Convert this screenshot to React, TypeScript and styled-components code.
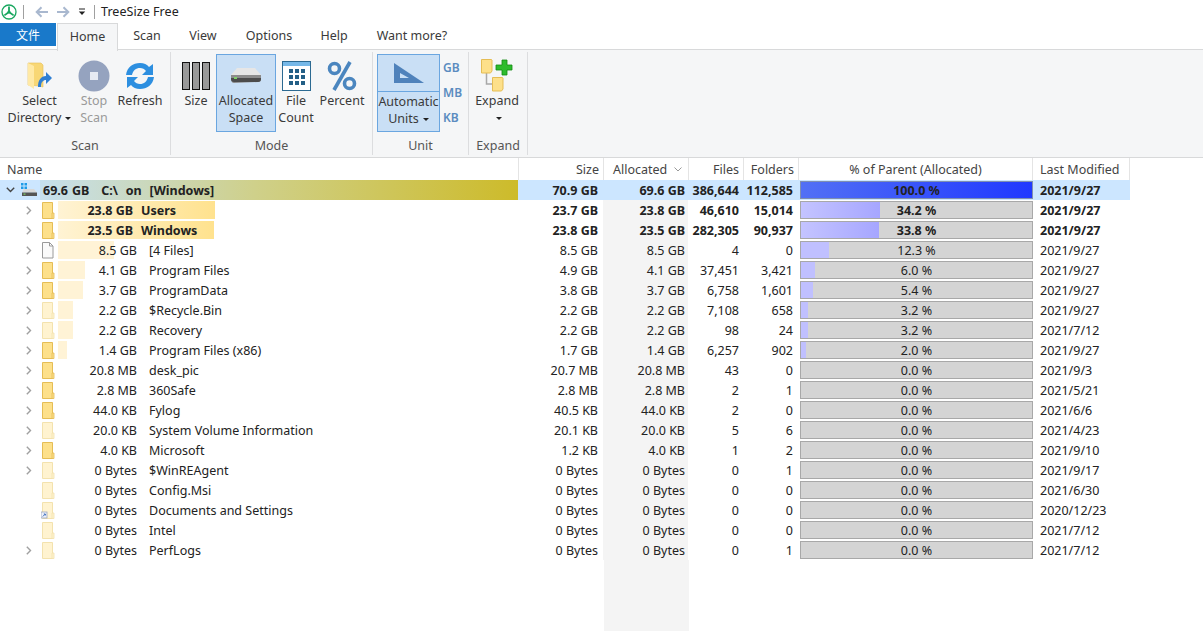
import { FC, ReactNode } from 'react';
import styled, { createGlobalStyle } from 'styled-components';

const GlobalStyle = createGlobalStyle`
  html, body { margin: 0; padding: 0; height: 100%; background: #fff; }
  #root { height: 100%; }
  body { font-family: "Noto Sans", "Open Sans", "Noto Sans CJK SC", sans-serif; font-size: 12.5px; color: #222; overflow: hidden; }
`;

const Page = styled.div`
  height: 631px;
  display: flex;
  flex-direction: column;
  overflow: hidden;
`;

/* ---- title bar ---- */
const TitleBar = styled.div`
  height: 23px;
  display: flex;
  align-items: center;
  padding-left: 1px;
`;
const TitleSep = styled.div<{ $ml: number }>`
  width: 1px;
  height: 14px;
  background: #a0a0a0;
  margin-left: ${p => p.$ml}px;
`;
const TitleIcon = styled.svg<{ $ml: number }>`
  margin-left: ${p => p.$ml}px;
  display: block;
`;
const TitleText = styled.span`
  margin-left: 6px;
  font-size: 12.5px;
  letter-spacing: 0.05px;
  color: #222;
`;

/* ---- tabs ---- */
const TabRow = styled.div`
  height: 26px;
  display: flex;
  border-bottom: 1px solid #d8d9da;
  box-sizing: content-box;
`;
const FileTab = styled.div`
  width: 56px;
  height: 23px;
  background: #1979ca;
  color: #fff;
  display: flex;
  align-items: center;
  justify-content: center;
  font-family: "Noto Sans CJK SC", sans-serif;
  font-size: 12px;
`;
const Tab = styled.div<{ $active?: boolean; $w: number }>`
  width: ${p => p.$w}px;
  height: ${p => (p.$active ? 28 : 24)}px;
  box-sizing: border-box;
  display: flex;
  align-items: center;
  justify-content: center;
  font-size: 12.5px;
  color: #3a3a3a;
  padding-bottom: ${p => (p.$active ? 3 : 0)}px;
  ${p => p.$active && `
    margin-left: 1px;
    background: #f5f6f7;
    border: 1px solid #d8d9da;
    border-bottom: none;
    position: relative;
    z-index: 1;
  `}
`;

/* ---- ribbon ---- */
const Ribbon = styled.div`
  height: 107px;
  background: #f5f6f7;
  border-bottom: 1px solid #d8d9da;
  display: flex;
  box-sizing: content-box;
`;
const Group = styled.div<{ $w: number }>`
  width: ${p => p.$w}px;
  height: 103px;
  margin-top: 2px;
  box-sizing: border-box;
  border-right: 1px solid #dcdddf;
  display: flex;
  flex-direction: column;
`;
const GroupBody = styled.div<{ $pl: number }>`
  height: 80px;
  display: flex;
  padding-left: ${p => p.$pl}px;
  padding-top: 2px;
  box-sizing: border-box;
`;
const GroupLabel = styled.div`
  text-align: center;
  font-size: 12.5px;
  line-height: 17px;
  color: #555;
  margin-top: 5px;
`;
const RibbonBtn = styled.div<{ $w: number; $on?: boolean; $off?: boolean }>`
  width: ${p => p.$w}px;
  height: 78px;
  box-sizing: border-box;
  display: flex;
  flex-direction: column;
  align-items: center;
  text-align: center;
  line-height: 17px;
  font-size: 12.5px;
  white-space: nowrap;
  color: ${p => (p.$off ? '#9a9a9a' : '#3a3a3a')};
  border: 1px solid ${p => (p.$on ? '#6aa6e0' : 'transparent')};
  background: ${p => (p.$on ? '#c9dff5' : 'transparent')};
`;
const IconSlot = styled.div`
  height: 37px;
  margin-top: 2px;
  margin-bottom: -2px;
  display: flex;
  align-items: center;
  justify-content: center;
`;
const Caret = styled.span`
  display: inline-block;
  width: 0;
  height: 0;
  border-left: 3px solid transparent;
  border-right: 3px solid transparent;
  border-top: 3px solid #222;
  vertical-align: middle;
  margin-left: 4px;
`;
const UnitBox = styled.div`
  width: 63px;
  height: 78px;
  box-sizing: border-box;
  border: 1px solid #6aa6e0;
  background: #c9dff5;
  display: flex;
  flex-direction: column;
  text-align: center;
  font-size: 12.5px;
  line-height: 17px;
  color: #3a3a3a;
`;
const UnitTop = styled.div`
  height: 37px;
  flex: none;
  box-sizing: border-box;
  border-bottom: 1px solid #6aa6e0;
  display: flex;
  align-items: center;
  justify-content: center;
`;
const UnitBottom = styled.div`
  padding-top: 1px;
`;
const UnitList = styled.div`
  display: flex;
  flex-direction: column;
  margin: 1px 0 0 3px;
`;
const UnitItem = styled.div`
  height: 25px;
  line-height: 25px;
  font-size: 12px;
  font-weight: 600;
  color: #5b8cc0;
`;

/* ---- table ---- */
const Table = styled.div`
  flex: 1;
  display: flex;
  flex-direction: column;
  min-height: 0;
`;
const Row = styled.div<{ $selected?: boolean; $bold?: boolean }>`
  display: flex;
  height: 20px;
  flex: none;
  width: 1130px;
  align-items: stretch;
  font-weight: ${p => (p.$bold ? 700 : 400)};
  background: ${p => (p.$selected ? '#cce6ff' : 'transparent')};
  color: #222;
`;
const HeaderRow = styled.div`
  display: flex;
  height: 22px;
  flex: none;
  width: 1130px;
  color: #444;
`;
const HeadCell = styled.div<{ $w: number; $align?: string; $pl?: number }>`
  width: ${p => p.$w}px;
  box-sizing: border-box;
  border-right: 1px solid #e4e4e4;
  display: flex;
  align-items: center;
  justify-content: ${p => p.$align ?? 'flex-end'};
  padding: 0 ${p => (p.$align === 'center' ? 0 : 4)}px 0 ${p => p.$pl ?? 7}px;
`;
const NameCell = styled.div`
  width: 519px;
  position: relative;
  display: flex;
  align-items: center;
`;
const Chevron = styled.svg<{ $ml: number }>`
  margin-left: ${p => p.$ml}px;
  flex: none;
  display: block;
`;
const ChevronGap = styled.div`
  width: 41px;
  flex: none;
`;
const NameBar = styled.div`
  position: absolute;
  left: 58px;
  top: 1px;
  bottom: 1px;
  background: #fff3d6;
`;
const BoldBar = styled(NameBar)`
  background: linear-gradient(90deg, #fff3d4, #ffe28e);
`;
const RootBar = styled.div`
  position: absolute;
  left: 40px;
  right: 1px;
  top: 0;
  bottom: 0;
  background: linear-gradient(90deg, #c6e0ee 0%, #cfd08a 45%, #cdbb2a 100%);
`;
const SizeText = styled.span<{ $bold?: boolean }>`
  position: relative;
  width: ${p => (p.$bold ? 75 : 79)}px;
  margin-left: 3px;
  text-align: right;
  flex: none;
`;
const NameText = styled.span<{ $bold?: boolean }>`
  position: relative;
  margin-left: ${p => (p.$bold ? 8 : 12)}px;
  white-space: nowrap;
`;
const RootText = styled.span`
  position: relative;
  margin-left: 5px;
  white-space: pre;
  word-spacing: 0.7px;
`;
const ValueCell = styled.div<{ $w: number; $shade?: boolean; $pr?: number }>`
  width: ${p => p.$w}px;
  box-sizing: border-box;
  display: flex;
  align-items: center;
  justify-content: flex-end;
  padding-right: ${p => p.$pr ?? 4}px;
  background: ${p => (p.$shade ? '#f4f4f4' : 'transparent')};
`;
const PctCell = styled.div`
  width: 235px;
  box-sizing: border-box;
  padding: 1px 0 1px 2px;
  display: flex;
`;
const PctTrack = styled.div<{ $root?: boolean }>`
  flex: 1;
  position: relative;
  background: #d4d4d4;
  border: 1px solid ${p => (p.$root ? '#7f8fb0' : '#a8a8a8')};
  display: flex;
  align-items: center;
  justify-content: center;
`;
const PctFill = styled.div<{ $tone: string }>`
  position: absolute;
  left: 0;
  top: 0;
  bottom: 0;
  background: ${p => p.$tone};
`;
const PctLabel = styled.span`
  position: relative;
`;
const DateCell = styled.div`
  width: 96px;
  padding-left: 7px;
  box-sizing: border-box;
  display: flex;
  align-items: center;
`;
const Filler = styled.div`
  flex: 1;
  display: flex;
`;
const FillerGap = styled.div`
  width: 604px;
  flex: none;
`;
const FillerShade = styled.div`
  width: 85px;
  background: #f4f4f4;
`;

/* ---- icons ---- */
const Logo = () => (
  <TitleIcon $ml={0} width="16" height="16" viewBox="0 0 16 16">
    <circle cx="8" cy="8" r="7" fill="#fff" stroke="#1aa760" strokeWidth="1.3" />
    <path d="M8 8V2.5M8 8l-4.6 3.4M8 8l4.6 3.4" stroke="#1aa760" strokeWidth="1.8" fill="none" />
    <circle cx="8" cy="8" r="1.6" fill="#1aa760" />
  </TitleIcon>
);

const NavArrow: FC<{ flip?: boolean; ml: number }> = ({ flip, ml }) => (
  <TitleIcon $ml={ml} width="14" height="12" viewBox="0 0 14 12">
    <path
      d={flip ? 'M1 6h11M7.5 1.2 12.3 6l-4.8 4.8' : 'M13 6H2M6.5 1.2 1.7 6l4.8 4.8'}
      stroke="#a9b8cf"
      strokeWidth="2"
      fill="none"
    />
  </TitleIcon>
);

const QuickDrop = () => (
  <TitleIcon $ml={8} width="8" height="8" viewBox="0 0 8 8">
    <path d="M1 1h6" stroke="#222" strokeWidth="1" />
    <path d="M.8 3.5h6.4L4 7z" fill="#222" />
  </TitleIcon>
);

const FolderArrow = () => (
  <svg width="26" height="28" viewBox="0 0 26 28">
    <path d="M1 1h13l2 2v22l-4-1-11-1z" fill="#f8d775" stroke="#e6bf58" strokeWidth=".6" />
    <path d="M1 1l6 3v23l-6-4z" fill="#ffe9a5" />
    <path d="M11 25c0-7 3-11 8-11v-4l6 6-6 6v-4c-3 0-5 2-5 7z" fill="#2f7fd3" />
  </svg>
);

const StopIcon = () => (
  <svg width="32" height="32" viewBox="0 0 32 32">
    <circle cx="16" cy="16" r="15.5" fill="#95a3bf" />
    <rect x="12" y="12" width="8" height="8" fill="#e6eaf2" />
  </svg>
);

const RefreshIcon = () => (
  <svg width="30" height="30" viewBox="0 0 30 30">
    <path d="M1 14C2 6 8 2 15 2c4 0 7 1.500 9 4l4-3v11H17l4-4c-1.500-2-3.500-3-6-3-4 0-7 2.500-8 7z" fill="#2d8fe0" />
    <path d="M29 16c-1 8-7 12-14 12-4 0-7-1.500-9-4l-4 3V16h11l-4 4c1.500 2 3.500 3 6 3 4 0 7-2.500 8-7z" fill="#2d8fe0" />
  </svg>
);

const SizeBars = () => (
  <svg width="28" height="28" viewBox="0 0 28 28">
    {[0.5, 10.5, 20.5].map(x => (
      <rect key={x} x={x} y=".5" width="7" height="27" fill="#999" stroke="#111" />
    ))}
  </svg>
);

const DriveIcon = () => (
  <svg width="30" height="15" viewBox="0 0 30 15">
    <path d="M6 0h18l6 7-1 5H1L0 7z" fill="#e6e6e6" />
    <path d="M0 7h30v4c0 2-1 3-3 3L3 15c-2 0-3-2-3-4z" fill="#8c8c8c" />
    <path d="M0 10h30v1c0 2-1 3-3 3H3c-2 0-3-1-3-3z" fill="#4c4c4c" />
    <rect x="3" y="9" width="3" height="2" fill="#7fd069" />
  </svg>
);

const CountIcon = () => (
  <svg width="29" height="30" viewBox="0 0 29 30">
    <rect x=".5" y=".5" width="28" height="29" fill="#fff" stroke="#2c6a92" />
    <rect x="1" y="1" width="27" height="4" fill="#76b8e8" />
    {[8, 14, 20].flatMap(x => [9, 15, 21].map(y => <rect key={`${x}-${y}`} x={x - 1} y={y - 1} width="4" height="4" fill="#235f86" />))}
  </svg>
);

const PercentIcon = () => (
  <svg width="30" height="30" viewBox="0 0 30 30">
    <circle cx="7.500" cy="7.500" r="5" fill="none" stroke="#4b86bf" strokeWidth="3.600" />
    <circle cx="22.500" cy="22.500" r="5" fill="none" stroke="#4b86bf" strokeWidth="3.600" />
    <path d="M23 1 7 29" stroke="#4b86bf" strokeWidth="3.600" />
  </svg>
);

const SetSquare = () => (
  <svg width="30" height="20" viewBox="0 0 30 20">
    <path fillRule="evenodd" d="M0 0l30 20H0zM6 10v5h9z" fill="#4f82bb" />
  </svg>
);

const ExpandIcon = () => (
  <svg width="32" height="33" viewBox="0 0 32 33">
    <path d="M5.500 14v11h6" fill="none" stroke="#a8a8a8" strokeWidth="1.500" />
    <path d="M.5.500h10l.5.500v11l-1.500 2H.5z" fill="#fde08a" stroke="#e5bd55" />
    <path d="M11.500 18.500h10l.5.500v11l-1.500 2h-9z" fill="#fde08a" stroke="#e5bd55" />
    <path d="M15 6h6V1h5v5h5v5h-5v5h-5v-5h-6z" fill="#2dbb2d" stroke="#128a12" strokeWidth=".8" />
  </svg>
);

const RootDrive = () => (
  <Chevron $ml={6} width="17" height="14" viewBox="0 0 17 14">
    <rect x="0" y="0" width="2.500" height="2.500" fill="#1e9be8" />
    <rect x="3.500" y="0" width="2.500" height="2.500" fill="#1e9be8" />
    <rect x="0" y="3.500" width="2.500" height="2.500" fill="#1e9be8" />
    <rect x="3.500" y="3.500" width="2.500" height="2.500" fill="#1e9be8" />
    <path d="M3 6h10l3 3.500H1z" fill="#d8d8d8" />
    <path d="M1 9.500h15V13H1z" fill="#555" />
    <rect x="2.500" y="10.500" width="2" height="1.200" fill="#7fd069" />
  </Chevron>
);

const TreeChevron: FC<{ open?: boolean }> = ({ open }) =>
  open ? (
    <Chevron $ml={6} width="9" height="6" viewBox="0 0 9 6">
      <path d="M.8.8 4.500 4.500 8.200.8" fill="none" stroke="#444" strokeWidth="1.400" />
    </Chevron>
  ) : (
    <Chevron $ml={26} width="6" height="9" viewBox="0 0 6 9">
      <path d="M.8.8 4.500 4.500.8 8.200" fill="none" stroke="#a0a0a0" strokeWidth="1.400" />
    </Chevron>
  );

const ItemIcon: FC<{ kind: string; faded: boolean; ml: number }> = ({ kind, faded, ml }) => {
  const fill = faded ? '#fff3d0' : '#fde08a';
  const line = faded ? '#f3e2ae' : '#e5bd55';
  return (
    <Chevron $ml={ml} width="14" height="17" viewBox="0 0 14 17">
      {kind === 'file' ? (
        <path d="M1.500.5h7l3.500 3.500v12H1.500zM8.500.5v3.500H12" fill="#fafafa" stroke="#9a9a9a" />
      ) : (
        <>
          <path d="M1.500.5h10v16h-10z" fill={fill} stroke={line} />
          <path d="M11 11h2v5.500h-2z" fill={fill} stroke={line} strokeWidth=".8" />
          {kind === 'link' && (
            <>
              <rect x="0" y="10" width="6" height="6" fill="#eef2fa" stroke="#9aa6bf" strokeWidth=".8" />
              <path d="M1.800 14.500 4 12.300M2.800 12h1.500v1.500" stroke="#2a5fb5" strokeWidth=".9" fill="none" />
            </>
          )}
        </>
      )}
    </Chevron>
  );
};

/* ---- data ---- */
interface IItem {
  size: string;
  name: string;
  bar: number;
  real: string;
  alloc: string;
  files: string;
  folders: string;
  pct: number;
  date: string;
  bold?: boolean;
  kind?: string;
  leaf?: boolean;
  faded?: boolean;
}

const items: IItem[] = [
  { size: '23.8 GB', name: 'Users', bar: 157, real: '23.7 GB', alloc: '23.8 GB', files: '46,610', folders: '15,014', pct: 34.2, date: '2021/9/27', bold: true },
  { size: '23.5 GB', name: 'Windows', bar: 156, real: '23.8 GB', alloc: '23.5 GB', files: '282,305', folders: '90,937', pct: 33.8, date: '2021/9/27', bold: true },
  { size: '8.5 GB', name: '[4 Files]', bar: 56, real: '8.5 GB', alloc: '8.5 GB', files: '4', folders: '0', pct: 12.3, date: '2021/9/27', kind: 'file' },
  { size: '4.1 GB', name: 'Program Files', bar: 27, real: '4.9 GB', alloc: '4.1 GB', files: '37,451', folders: '3,421', pct: 6.0, date: '2021/9/27' },
  { size: '3.7 GB', name: 'ProgramData', bar: 25, real: '3.8 GB', alloc: '3.7 GB', files: '6,758', folders: '1,601', pct: 5.4, date: '2021/9/27' },
  { size: '2.2 GB', name: '$Recycle.Bin', bar: 15, real: '2.2 GB', alloc: '2.2 GB', files: '7,108', folders: '658', pct: 3.2, date: '2021/9/27', faded: true },
  { size: '2.2 GB', name: 'Recovery', bar: 15, real: '2.2 GB', alloc: '2.2 GB', files: '98', folders: '24', pct: 3.2, date: '2021/7/12', faded: true },
  { size: '1.4 GB', name: 'Program Files (x86)', bar: 9, real: '1.7 GB', alloc: '1.4 GB', files: '6,257', folders: '902', pct: 2.0, date: '2021/9/27' },
  { size: '20.8 MB', name: 'desk_pic', bar: 0, real: '20.7 MB', alloc: '20.8 MB', files: '43', folders: '0', pct: 0, date: '2021/9/3' },
  { size: '2.8 MB', name: '360Safe', bar: 0, real: '2.8 MB', alloc: '2.8 MB', files: '2', folders: '1', pct: 0, date: '2021/5/21' },
  { size: '44.0 KB', name: 'Fylog', bar: 0, real: '40.5 KB', alloc: '44.0 KB', files: '2', folders: '0', pct: 0, date: '2021/6/6' },
  { size: '20.0 KB', name: 'System Volume Information', bar: 0, real: '20.1 KB', alloc: '20.0 KB', files: '5', folders: '6', pct: 0, date: '2021/4/23', faded: true },
  { size: '4.0 KB', name: 'Microsoft', bar: 0, real: '1.2 KB', alloc: '4.0 KB', files: '1', folders: '2', pct: 0, date: '2021/9/10' },
  { size: '0 Bytes', name: '$WinREAgent', bar: 0, real: '0 Bytes', alloc: '0 Bytes', files: '0', folders: '1', pct: 0, date: '2021/9/17', faded: true },
  { size: '0 Bytes', name: 'Config.Msi', bar: 0, real: '0 Bytes', alloc: '0 Bytes', files: '0', folders: '0', pct: 0, date: '2021/6/30', faded: true, leaf: true },
  { size: '0 Bytes', name: 'Documents and Settings', bar: 0, real: '0 Bytes', alloc: '0 Bytes', files: '0', folders: '0', pct: 0, date: '2020/12/23', faded: true, leaf: true, kind: 'link' },
  { size: '0 Bytes', name: 'Intel', bar: 0, real: '0 Bytes', alloc: '0 Bytes', files: '0', folders: '0', pct: 0, date: '2021/7/12', faded: true, leaf: true },
  { size: '0 Bytes', name: 'PerfLogs', bar: 0, real: '0 Bytes', alloc: '0 Bytes', files: '0', folders: '1', pct: 0, date: '2021/7/12', faded: true },
];

const Btn: FC<{ w: number; icon: ReactNode; on?: boolean; off?: boolean; children: ReactNode }> = ({ w, icon, on, off, children }) => (
  <RibbonBtn $w={w} $on={on} $off={off}>
    <IconSlot>{icon}</IconSlot>
    {children}
  </RibbonBtn>
);

const ItemRow: FC<{ item: IItem }> = ({ item }) => (
  <Row $bold={item.bold}>
    <NameCell>
      {item.bar > 0 && (item.bold ? <BoldBar style={{ width: item.bar }} /> : <NameBar style={{ width: item.bar }} />)}
      {item.leaf ? <ChevronGap /> : <TreeChevron />}
      <ItemIcon kind={item.kind ?? 'folder'} faded={!!item.faded} ml={item.leaf ? 0 : 9} />
      <SizeText $bold={item.bold}>{item.size}</SizeText>
      <NameText $bold={item.bold}>{item.name}</NameText>
    </NameCell>
    <ValueCell $w={84} $pr={5}>{item.real}</ValueCell>
    <ValueCell $w={85} $shade $pr={3}>{item.alloc}</ValueCell>
    <ValueCell $w={55}>{item.files}</ValueCell>
    <ValueCell $w={55} $pr={5}>{item.folders}</ValueCell>
    <PctCell>
      <PctTrack>
        <PctFill $tone={item.bold ? 'linear-gradient(90deg, #c4c4ff, #a6a6ff)' : '#c0c0ff'} style={{ width: `${item.pct}%` }} />
        <PctLabel>{item.pct.toFixed(1)} %</PctLabel>
      </PctTrack>
    </PctCell>
    <DateCell>{item.date}</DateCell>
  </Row>
);

export default function App() {
  return (
    <Page>
      <GlobalStyle />
      <TitleBar>
        <Logo />
        <TitleSep $ml={6} />
        <NavArrow ml={11} />
        <NavArrow flip ml={7} />
        <QuickDrop />
        <TitleSep $ml={8} />
        <TitleText>TreeSize Free</TitleText>
      </TitleBar>
      <TabRow>
        <FileTab>文件</FileTab>
        <Tab $active $w={61}>Home</Tab>
        <Tab $w={58}>Scan</Tab>
        <Tab $w={54}>View</Tab>
        <Tab $w={78}>Options</Tab>
        <Tab $w={52}>Help</Tab>
        <Tab $w={104}>Want more?</Tab>
      </TabRow>
      <Ribbon>
        <Group $w={171}>
          <GroupBody $pl={7}>
            <Btn w={65} icon={<FolderArrow />}>
              <span>Select</span>
              <span>Directory<Caret /></span>
            </Btn>
            <Btn w={44} off icon={<StopIcon />}>
              <span>Stop</span>
              <span>Scan</span>
            </Btn>
            <Btn w={48} icon={<RefreshIcon />}>
              <span>Refresh</span>
            </Btn>
          </GroupBody>
          <GroupLabel>Scan</GroupLabel>
        </Group>
        <Group $w={202}>
          <GroupBody $pl={5}>
            <Btn w={40} icon={<SizeBars />}>
              <span>Size</span>
            </Btn>
            <Btn w={60} on icon={<DriveIcon />}>
              <span>Allocated</span>
              <span>Space</span>
            </Btn>
            <Btn w={40} icon={<CountIcon />}>
              <span>File</span>
              <span>Count</span>
            </Btn>
            <Btn w={52} icon={<PercentIcon />}>
              <span>Percent</span>
            </Btn>
          </GroupBody>
          <GroupLabel>Mode</GroupLabel>
        </Group>
        <Group $w={96}>
          <GroupBody $pl={4}>
            <UnitBox>
              <UnitTop><SetSquare /></UnitTop>
              <UnitBottom>
                <div>Automatic</div>
                <div>Units<Caret /></div>
              </UnitBottom>
            </UnitBox>
            <UnitList>
              <UnitItem>GB</UnitItem>
              <UnitItem>MB</UnitItem>
              <UnitItem>KB</UnitItem>
            </UnitList>
          </GroupBody>
          <GroupLabel>Unit</GroupLabel>
        </Group>
        <Group $w={59}>
          <GroupBody $pl={3}>
            <Btn w={50} icon={<ExpandIcon />}>
              <span>Expand</span>
              <span><Caret /></span>
            </Btn>
          </GroupBody>
          <GroupLabel>Expand</GroupLabel>
        </Group>
      </Ribbon>
      <Table>
        <HeaderRow>
          <HeadCell $w={519} $align="flex-start">Name</HeadCell>
          <HeadCell $w={85}>Size</HeadCell>
          <HeadCell $w={85} $align="flex-start" $pl={9}>Allocated&nbsp;&nbsp;<svg width="8" height="5" viewBox="0 0 8 5"><path d="M.5.5 4 4 7.500.5" fill="none" stroke="#999" /></svg></HeadCell>
          <HeadCell $w={55}>Files</HeadCell>
          <HeadCell $w={55}>Folders</HeadCell>
          <HeadCell $w={234} $align="center" $pl={0}>% of Parent (Allocated)</HeadCell>
          <HeadCell $w={97} $align="flex-start">Last Modified</HeadCell>
        </HeaderRow>
        <Row $selected $bold>
          <NameCell>
            <RootBar />
            <TreeChevron open />
            <RootDrive />
            <RootText>69.6 GB   C:\  on  [Windows]</RootText>
          </NameCell>
          <ValueCell $w={84} $pr={5}>70.9 GB</ValueCell>
          <ValueCell $w={85} $pr={3}>69.6 GB</ValueCell>
          <ValueCell $w={55}>386,644</ValueCell>
          <ValueCell $w={55} $pr={5}>112,585</ValueCell>
          <PctCell>
            <PctTrack $root>
              <PctFill $tone="linear-gradient(90deg, #5270f5, #1f38ff)" style={{ width: '100%' }} />
              <PctLabel>100.0 %</PctLabel>
            </PctTrack>
          </PctCell>
          <DateCell>2021/9/27</DateCell>
        </Row>
        {items.map(item => <ItemRow key={item.name} item={item} />)}
        <Filler>
          <FillerGap />
          <FillerShade />
        </Filler>
      </Table>
    </Page>
  );
}
